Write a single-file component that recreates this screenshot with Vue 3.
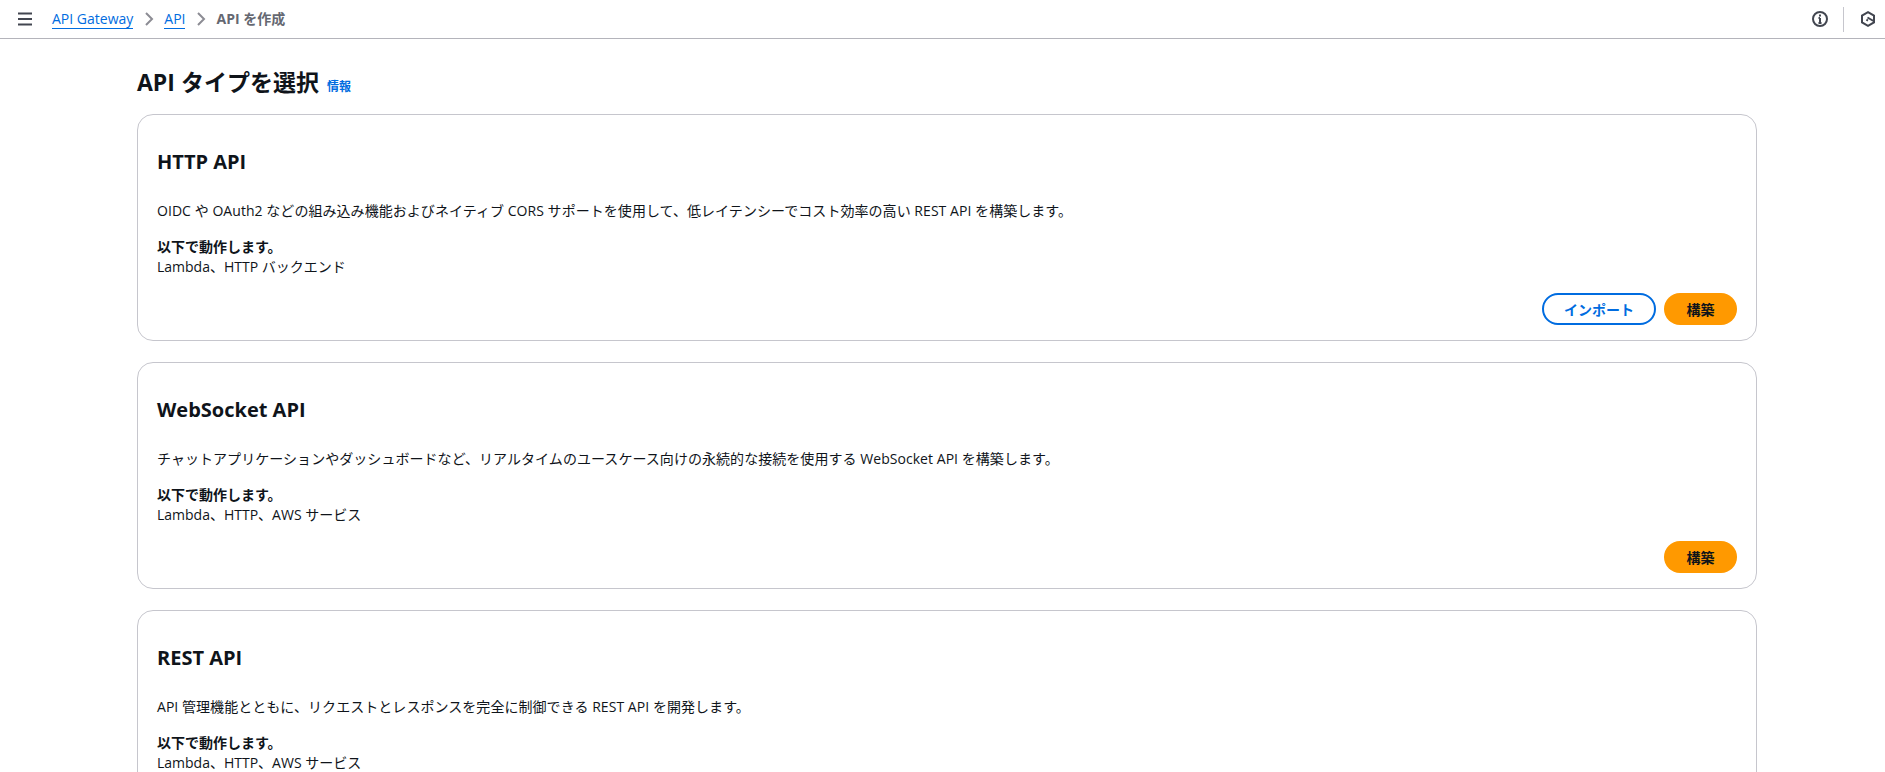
<template>
  <div class="page">
    <header class="topbar">
      <button class="menu-btn" aria-label="メニュー">
        <svg width="16" height="16" viewBox="0 0 16 16"><path d="M1 2.5h14M1 8h14M1 13.5h14" /></svg>
      </button>
      <nav class="crumbs">
        <a href="#">API Gateway</a>
        <svg class="chev" width="16" height="16" viewBox="0 0 16 16"><path d="M5 2l6 6-6 6" /></svg>
        <a href="#">API</a>
        <svg class="chev" width="16" height="16" viewBox="0 0 16 16"><path d="M5 2l6 6-6 6" /></svg>
        <span class="current">API を作成</span>
      </nav>
      <div class="top-icons">
        <svg class="ic" width="16" height="16" viewBox="0 0 16 16">
          <circle cx="8" cy="8" r="7" />
          <path d="M8 7v5M6.5 12h3M6.5 7H8" />
          <path d="M8 3.6v1.8" />
        </svg>
        <span class="divider"></span>
        <svg class="ic" width="16" height="16" viewBox="0 0 16 16">
          <path d="M8 1.2l6 3.4v6.8l-6 3.4-6-3.4V4.6z" />
          <path d="M7.5 6.5l6 3.5" />
          <path d="M8 9.6l-1.6-1" />
        </svg>
      </div>
    </header>

    <main class="content">
      <div class="heading">
        <h1>API タイプを選択</h1>
        <a href="#" class="info">情報</a>
      </div>

      <section class="card" v-for="api in apis" :key="api.name">
        <h2>{{ api.name }}</h2>
        <p class="desc">{{ api.desc }}</p>
        <div class="works">
          <strong>以下で動作します。</strong>
          <span>{{ api.works }}</span>
        </div>
        <div class="actions">
          <button v-if="api.canImport" class="btn normal">インポート</button>
          <button class="btn primary">構築</button>
        </div>
      </section>
    </main>
  </div>
</template>

<script setup>
const apis = [
  {
    name: 'HTTP API',
    desc: 'OIDC や OAuth2 などの組み込み機能およびネイティブ CORS サポートを使用して、低レイテンシーでコスト効率の高い REST API を構築します。',
    works: 'Lambda、HTTP バックエンド',
    canImport: true
  },
  {
    name: 'WebSocket API',
    desc: 'チャットアプリケーションやダッシュボードなど、リアルタイムのユースケース向けの永続的な接続を使用する WebSocket API を構築します。',
    works: 'Lambda、HTTP、AWS サービス',
    canImport: false
  },
  {
    name: 'REST API',
    desc: 'API 管理機能とともに、リクエストとレスポンスを完全に制御できる REST API を開発します。',
    works: 'Lambda、HTTP、AWS サービス',
    canImport: true
  }
]
</script>

<style>
html, body {
  margin: 0;
  height: 100%;
  overflow: hidden;
  background: #fff;
}
</style>

<style scoped>
.page {
  font-family: "Open Sans", "Noto Sans", "Noto Sans CJK JP", sans-serif;
  font-size: 14px;
  line-height: 20px;
  color: #0f141a;
}

.topbar {
  display: flex;
  align-items: center;
  height: 38px;
  padding: 0 9px 0 17px;
  border-bottom: 1px solid #b4b4bb;
  box-sizing: content-box;
}

.menu-btn {
  display: flex;
  padding: 0;
  border: none;
  background: none;
}

.menu-btn path {
  fill: none;
  stroke: #424650;
  stroke-width: 2;
}

.crumbs {
  display: flex;
  align-items: center;
  gap: 7.5px;
  margin-left: 19px;
}

.crumbs a {
  color: #006ce0;
  text-decoration: none;
  border-bottom: 1px solid #006ce0;
  line-height: 19px;
}

.chev path {
  fill: none;
  stroke: #8c8c94;
  stroke-width: 2;
}

.current {
  font-weight: 700;
  color: #656871;
}

.top-icons {
  display: flex;
  align-items: center;
  margin-left: auto;
}

.ic circle,
.ic path {
  fill: none;
  stroke: #424650;
  stroke-width: 2;
}

.divider {
  width: 1px;
  height: 25px;
  margin: 0 16px 0 15px;
  background: #c6c6cd;
}

.content {
  padding: 0 128px 0 137px;
}

.heading {
  display: flex;
  align-items: baseline;
  gap: 8px;
  padding: 28px 0 17px;
}

h1 {
  margin: 0;
  font-size: 23px;
  line-height: 30px;
  font-weight: 700;
}

.info {
  font-size: 12px;
  font-weight: 700;
  color: #006ce0;
  text-decoration: none;
}

.card {
  box-sizing: border-box;
  height: 227px;
  margin-bottom: 21px;
  padding: 33px 19px 0;
  border: 1px solid #c6c6cd;
  border-radius: 16px;
  display: flex;
  flex-direction: column;
}

h2 {
  margin: 0;
  font-size: 20px;
  line-height: 28px;
  font-weight: 700;
}

.desc {
  margin: 25px 0 0;
  letter-spacing: 0.05px;
}

.works {
  display: flex;
  flex-direction: column;
  margin-top: 16px;
}

.actions {
  display: flex;
  justify-content: flex-end;
  gap: 8px;
  margin-top: auto;
  padding-bottom: 15px;
}

.btn {
  height: 32px;
  border-radius: 16px;
  font-family: inherit;
  font-size: 14px;
  font-weight: 700;
  box-sizing: border-box;
}

.normal {
  width: 114px;
  background: #fff;
  color: #006ce0;
  border: 2px solid #006ce0;
}

.primary {
  width: 73px;
  background: #ff9900;
  color: #0f141a;
  border: none;
}
</style>
